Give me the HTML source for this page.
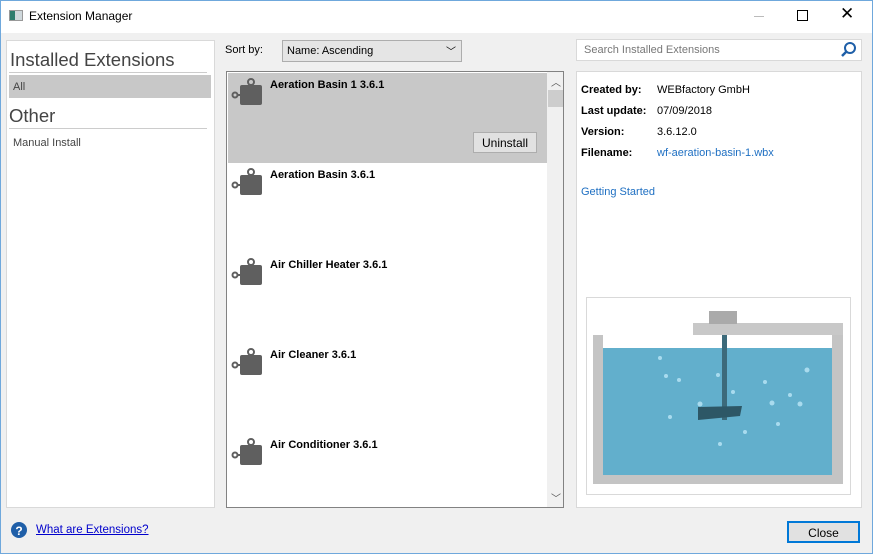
<!DOCTYPE html>
<html><head><meta charset="utf-8"><style>
*{margin:0;padding:0;box-sizing:border-box}
body{width:873px;height:554px;background:#f0f0f0;font-family:"Liberation Sans",sans-serif;font-size:11px;color:#000;position:relative;overflow:hidden;}
.abs{position:absolute}
.title{left:0;top:0;width:873px;height:33px;background:#fff}
.item{position:absolute;left:1px;width:319px;height:90px}
.item b{position:absolute;left:42px;top:6px;font-size:11px}
</style></head><body>
<div class="abs title"></div>
<div class="abs" style="left:0;top:0;width:873px;height:554px;border:1px solid #6fa8dc;pointer-events:none;z-index:5"></div>
<div class="abs" style="left:9px;top:10px;width:14px;height:11px;background:#cfd8dc;border:1px solid #999"><div style="width:5px;height:9px;background:#2e7d6e"></div></div>
<div class="abs" style="left:29px;top:9px;font-size:12px">Extension Manager</div>
<div class="abs" style="left:754px;top:16px;width:10px;height:1px;background:#bbb"></div>
<div class="abs" style="left:797px;top:10px;width:11px;height:11px;border:1px solid #000"></div>
<div class="abs" style="left:840px;top:4px;font-size:17px">✕</div>

<div class="abs" style="left:6px;top:40px;width:209px;height:468px;background:#fff;border:1px solid #d9d9d9"></div>
<div class="abs" style="left:10px;top:49px;font-size:18.5px;color:#444">Installed Extensions</div>
<div class="abs" style="left:9px;top:72px;width:198px;height:1px;background:#ccc"></div>
<div class="abs" style="left:9px;top:75px;width:202px;height:23px;background:#c8c8c8"></div>
<div class="abs" style="left:13px;top:81px;font-size:11px;color:#444">All</div>
<div class="abs" style="left:9px;top:105px;font-size:18.5px;color:#444">Other</div>
<div class="abs" style="left:9px;top:128px;width:198px;height:1px;background:#ccc"></div>
<div class="abs" style="left:13px;top:137px;font-size:11px;color:#444">Manual Install</div>

<div class="abs" style="left:225px;top:44px;font-size:11px">Sort by:</div>
<div class="abs" style="left:282px;top:40px;width:180px;height:22px;background:#e5e5e5;border:1px solid #adadad;font-size:11px;padding:4px 0 0 4px">Name: Ascending<span style="position:absolute;right:5px;top:2px;font-size:10px">﹀</span></div>

<div class="abs" style="left:226px;top:71px;width:338px;height:437px;background:#fff;border:1px solid #828282;overflow:hidden">
 <div class="item" style="top:1px;background:#c8c8c8"><b>Aeration Basin 1 3.6.1</b>
  <div class="abs" style="left:245px;top:59px;width:64px;height:21px;background:#e1e1e1;border:1px solid #adadad;font-size:12px;text-align:center;padding-top:3px">Uninstall</div></div>
 <div class="item" style="top:91px"><b>Aeration Basin 3.6.1</b></div>
 <div class="item" style="top:181px"><b>Air Chiller Heater 3.6.1</b></div>
 <div class="item" style="top:271px"><b>Air Cleaner 3.6.1</b></div>
 <div class="item" style="top:361px"><b>Air Conditioner 3.6.1</b></div>
 <div class="abs" style="left:320px;top:0;width:17px;height:435px;background:#f0f0f0"></div>
 <div class="abs" style="left:321px;top:18px;width:15px;height:17px;background:#cdcdcd"></div>
 <div class="abs" style="left:324px;top:2px;font-size:10px;color:#555">︿</div>
 <div class="abs" style="left:324px;top:418px;font-size:10px;color:#555">﹀</div>
</div>
<svg class="abs" style="left:226px;top:71px" width="40" height="437">
 <g fill="#5f5f5f"><g id="p">
 <rect x="14" y="14" width="22" height="20" rx="2"/><circle cx="25" cy="11" r="3" fill="none" stroke="#5f5f5f" stroke-width="2"/><circle cx="9" cy="24" r="2.5" fill="none" stroke="#5f5f5f" stroke-width="2"/><rect x="11" y="23" width="4" height="2"/></g>
 <use href="#p" y="90"/><use href="#p" y="180"/><use href="#p" y="270"/><use href="#p" y="360"/></g>
</svg>

<div class="abs" style="left:576px;top:39px;width:286px;height:22px;background:#fff;border:1px solid #d9d9d9;font-size:11px;color:#777;padding:4px 0 0 7px">Search Installed Extensions</div>
<svg class="abs" style="left:840px;top:41px" width="18" height="18"><circle cx="10" cy="7" r="5" fill="none" stroke="#1e5fa8" stroke-width="2"/><line x1="6" y1="11" x2="2" y2="15" stroke="#1e5fa8" stroke-width="2.5"/></svg>

<div class="abs" style="left:576px;top:71px;width:286px;height:437px;background:#fff;border:1px solid #d9d9d9"></div>
<div class="abs" style="left:581px;top:80px;line-height:21px;font-size:11px">
<div><b style="display:inline-block;width:76px">Created by:</b>WEBfactory GmbH</div>
<div><b style="display:inline-block;width:76px">Last update:</b>07/09/2018</div>
<div><b style="display:inline-block;width:76px">Version:</b>3.6.12.0</div>
<div><b style="display:inline-block;width:76px">Filename:</b><span style="color:#1e6fc2">wf-aeration-basin-1.wbx</span></div>
</div>
<div class="abs" style="left:581px;top:186px;color:#1e6fc2">Getting Started</div>

<div class="abs" style="left:586px;top:297px;width:265px;height:198px;border:1px solid #d9d9d9;background:#fff"></div>
<svg class="abs" style="left:590px;top:300px" width="258" height="190">
 <rect x="3" y="35" width="10" height="149" fill="#c4c4c4"/>
 <rect x="3" y="175" width="250" height="9" fill="#c4c4c4"/>
 <rect x="242" y="23" width="11" height="161" fill="#c4c4c4"/>
 <rect x="103" y="23" width="150" height="12" fill="#c8c8c8"/>
 <rect x="119" y="11" width="28" height="13" fill="#aaa"/>
 <rect x="13" y="48" width="229" height="127" fill="#62afcc"/>
 <rect x="132" y="35" width="5" height="85" fill="#3c6a7a"/>
 <path d="M108 107 L152 106 L150 116 L108 120Z" fill="#2d5766"/>
 <g fill="#a9dbee"><circle cx="70" cy="58" r="2"/><circle cx="89" cy="80" r="2"/><circle cx="128" cy="75" r="2"/><circle cx="175" cy="82" r="2"/><circle cx="143" cy="92" r="2"/><circle cx="182" cy="103" r="2.5"/><circle cx="110" cy="104" r="2.5"/><circle cx="80" cy="117" r="2"/><circle cx="155" cy="132" r="2"/><circle cx="188" cy="124" r="2"/><circle cx="210" cy="104" r="2.5"/><circle cx="217" cy="70" r="2.5"/><circle cx="130" cy="144" r="2"/><circle cx="76" cy="76" r="2"/><circle cx="200" cy="95" r="2"/></g>
</svg>

<svg class="abs" style="left:11px;top:522px" width="17" height="17"><circle cx="8" cy="8" r="8" fill="#1f5fa8"/><text x="8" y="13" fill="#fff" font-size="12" font-weight="bold" text-anchor="middle" font-family="Liberation Sans">?</text></svg>
<div class="abs" style="left:36px;top:524px;color:#0000cc;text-decoration:underline;font-size:11.5px">What are Extensions?</div>
<div class="abs" style="left:787px;top:521px;width:73px;height:22px;background:#e1e1e1;border:2px solid #0078d7;text-align:center;padding-top:3px;font-size:12px">Close</div>
</body></html>
